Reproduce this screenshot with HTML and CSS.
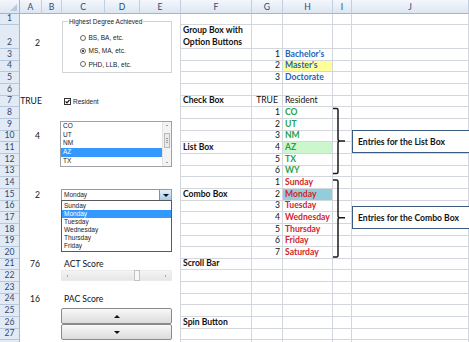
FILE: index.html
```html
<!DOCTYPE html>
<html lang="en">
<head>
    <meta charset="UTF-8">
    <title>Form Controls</title>
    <link rel="stylesheet" href="styles.css">
</head>
<body>
<div class="sheet">
    <div class="grid">
        <div class="row hdr"><div class="corner"></div><div>A</div><div>B</div><div>C</div><div>D</div><div>E</div><div>F</div><div>G</div><div>H</div><div>I</div><div>J</div></div>
        <div class="row"><div class="rh">1</div><div></div><div></div><div></div><div></div><div></div><div></div><div></div><div></div><div></div><div></div></div>
        <div class="row"><div class="rh">2</div><div class="n">2</div><div></div><div></div><div></div><div></div><div class="b wrap">Group Box with Option Buttons</div><div></div><div></div><div></div><div></div></div>
        <div class="row"><div class="rh">3</div><div></div><div></div><div></div><div></div><div></div><div></div><div class="n">1</div><div class="b blue">Bachelor's</div><div></div><div></div></div>
        <div class="row"><div class="rh">4</div><div></div><div></div><div></div><div></div><div></div><div></div><div class="n">2</div><div class="b blue yellow">Master's</div><div></div><div></div></div>
        <div class="row"><div class="rh">5</div><div></div><div></div><div></div><div></div><div></div><div></div><div class="n">3</div><div class="b blue">Doctorate</div><div></div><div></div></div>
        <div class="row"><div class="rh">6</div><div></div><div></div><div></div><div></div><div></div><div></div><div></div><div></div><div></div><div></div></div>
        <div class="row"><div class="rh">7</div><div class="c">TRUE</div><div></div><div></div><div></div><div></div><div class="b">Check Box</div><div class="c">TRUE</div><div>Resident</div><div></div><div></div></div>
        <div class="row"><div class="rh">8</div><div></div><div></div><div></div><div></div><div></div><div></div><div class="n">1</div><div class="b green">CO</div><div></div><div></div></div>
        <div class="row"><div class="rh">9</div><div></div><div></div><div></div><div></div><div></div><div></div><div class="n">2</div><div class="b green">UT</div><div></div><div></div></div>
        <div class="row"><div class="rh">10</div><div class="n">4</div><div></div><div></div><div></div><div></div><div></div><div class="n">3</div><div class="b green">NM</div><div></div><div></div></div>
        <div class="row"><div class="rh">11</div><div></div><div></div><div></div><div></div><div></div><div class="b">List Box</div><div class="n">4</div><div class="b green mint">AZ</div><div></div><div></div></div>
        <div class="row"><div class="rh">12</div><div></div><div></div><div></div><div></div><div></div><div></div><div class="n">5</div><div class="b green">TX</div><div></div><div></div></div>
        <div class="row"><div class="rh">13</div><div></div><div></div><div></div><div></div><div></div><div></div><div class="n">6</div><div class="b green">WY</div><div></div><div></div></div>
        <div class="row"><div class="rh">14</div><div></div><div></div><div></div><div></div><div></div><div></div><div class="n">1</div><div class="b red">Sunday</div><div></div><div></div></div>
        <div class="row"><div class="rh">15</div><div class="n">2</div><div></div><div></div><div></div><div></div><div class="b">Combo Box</div><div class="n">2</div><div class="b red teal">Monday</div><div></div><div></div></div>
        <div class="row"><div class="rh">16</div><div></div><div></div><div></div><div></div><div></div><div></div><div class="n">3</div><div class="b red">Tuesday</div><div></div><div></div></div>
        <div class="row"><div class="rh">17</div><div></div><div></div><div></div><div></div><div></div><div></div><div class="n">4</div><div class="b red">Wednesday</div><div></div><div></div></div>
        <div class="row"><div class="rh">18</div><div></div><div></div><div></div><div></div><div></div><div></div><div class="n">5</div><div class="b red">Thursday</div><div></div><div></div></div>
        <div class="row"><div class="rh">19</div><div></div><div></div><div></div><div></div><div></div><div></div><div class="n">6</div><div class="b red">Friday</div><div></div><div></div></div>
        <div class="row"><div class="rh">20</div><div></div><div></div><div></div><div></div><div></div><div></div><div class="n">7</div><div class="b red">Saturday</div><div></div><div></div></div>
        <div class="row"><div class="rh">21</div><div class="n">76</div><div></div><div>ACT Score</div><div></div><div></div><div class="b">Scroll Bar</div><div></div><div></div><div></div><div></div></div>
        <div class="row"><div class="rh">22</div><div></div><div></div><div></div><div></div><div></div><div></div><div></div><div></div><div></div><div></div></div>
        <div class="row"><div class="rh">23</div><div></div><div></div><div></div><div></div><div></div><div></div><div></div><div></div><div></div><div></div></div>
        <div class="row"><div class="rh">24</div><div class="n">16</div><div></div><div>PAC Score</div><div></div><div></div><div></div><div></div><div></div><div></div><div></div></div>
        <div class="row"><div class="rh">25</div><div></div><div></div><div></div><div></div><div></div><div></div><div></div><div></div><div></div><div></div></div>
        <div class="row"><div class="rh">26</div><div></div><div></div><div></div><div></div><div></div><div class="b">Spin Button</div><div></div><div></div><div></div><div></div></div>
        <div class="row"><div class="rh">27</div><div></div><div></div><div></div><div></div><div></div><div></div><div></div><div></div><div></div><div></div></div>
        <div class="row"><div class="rh"></div><div></div><div></div><div></div><div></div><div></div><div></div><div></div><div></div><div></div><div></div></div>
    </div>

    <!-- form controls floating over the sheet -->
    <div class="group">
        <span class="legend">Highest Degree Achieved</span>
        <div class="opts">
            <div class="opt"><span class="radio"></span>BS, BA, etc.</div>
            <div class="opt"><span class="radio on"></span>MS, MA, etc.</div>
            <div class="opt"><span class="radio"></span>PHD, LLB, etc.</div>
        </div>
    </div>

    <div class="check">
        <span class="box">
            <svg width="5" height="5" viewBox="0 0 5 5"><path d="M0.6 2.4 L2 3.9 L4.5 0.8" fill="none" stroke="#111" stroke-width="1.1"/></svg>
        </span>
        Resident
    </div>

    <div class="listbox">
        <div class="items">
            <div class="item">CO</div>
            <div class="item">UT</div>
            <div class="item">NM</div>
            <div class="item sel">AZ</div>
            <div class="item">TX</div>
        </div>
        <div class="vscroll">
            <span class="arr up"></span>
            <span class="vthumb"><i></i><i></i><i></i></span>
            <span class="arr down"></span>
        </div>
    </div>

    <div class="combo">
        <span class="value">Monday</span>
        <span class="drop"><span class="arr down dark"></span></span>
    </div>
    <div class="dropdown">
        <div class="item">Sunday</div>
        <div class="item sel">Monday</div>
        <div class="item">Tuesday</div>
        <div class="item">Wednesday</div>
        <div class="item">Thursday</div>
        <div class="item">Friday</div>
    </div>

    <div class="hscroll">
        <span class="arr left"></span>
        <span class="hthumb"></span>
        <span class="arr right"></span>
    </div>

    <div class="spin">
        <div><span class="arr up big"></span></div>
        <div><span class="arr down big"></span></div>
    </div>

    <svg class="braces" width="20" height="160" viewBox="0 0 20 160">
        <path d="M3 4.5 H6.5 Q8 4.5 8 6 V35 Q8 37 10 37 H15 M10 37 Q8 37 8 39 V68 Q8 69.5 6.5 69.5 H3" fill="none" stroke="#1b1b1b" stroke-width="1.5"/>
        <path d="M3 76 H6.5 Q8 76 8 77.5 V111.7 Q8 113.7 10 113.7 H15 M10 113.7 Q8 113.7 8 115.7 V151.5 Q8 153 6.5 153 H3" fill="none" stroke="#1b1b1b" stroke-width="1.5"/>
    </svg>

    <div class="note note-list">Entries for the List Box</div>
    <div class="note note-combo">Entries for the Combo Box</div>
</div>
</body>
</html>
```

FILE: styles.css
```css
body {
    margin: 0;
    background-color: #fff;
    font-family: Lato, "Liberation Sans", sans-serif;
    overflow: hidden;
}

.sheet {
    position: relative;
    width: 469px;
    height: 342px;
    overflow: hidden;
}

/* Grade da planilha */
.grid {
    display: grid;
    grid-template-columns: 20px 22px 20px 43px 35px 41px 71px 31px 50px 19px 117px;
    grid-template-rows: 14px 11px 24px repeat(25, 11.67px) 12px;
    font-size: 8.6px;
    color: #111;
}

.row {
    display: contents;
}

.row > div {
    box-sizing: border-box;
    display: flex;
    align-items: flex-end;
    padding: 0 2px 1px;
    line-height: 10px;
    white-space: nowrap;
    min-width: 0;
}

.row > div:nth-child(n+7) {
    border-right: 1px solid #d3d7dd;
    border-bottom: 1px solid #d3d7dd;
}

.row > div:nth-child(6) {
    border-right: 1px solid #d3d7dd;
}

.row > .rh {
    background-color: #e2eaf6;
    border-right: 1px solid #9eb6ce;
    border-bottom: 1px solid #b7c8dc;
    justify-content: center;
    color: #2f4a70;
    padding: 0 0 1px;
}

.row.hdr > div {
    background: linear-gradient(#f4f7fb, #dce6f2);
    border-right: 1px solid #c0cfe0;
    border-bottom: 1px solid #9eb6ce;
    justify-content: center;
    align-items: center;
    color: #2f4a70;
    padding: 0;
}

.row.hdr > .corner {
    position: relative;
    border-right: 1px solid #9eb6ce;
}

.corner::after {
    content: "";
    position: absolute;
    right: 2px;
    bottom: 2px;
    border-left: 7px solid transparent;
    border-bottom: 7px solid #b9c8da;
}

.n { justify-content: flex-end; }
.c { justify-content: center; }
.b { font-weight: 700; }

.row > .wrap {
    white-space: normal;
    line-height: 11.5px;
    padding-bottom: 0;
}

.blue { color: #1f63b6; }
.green { color: #27a14a; }
.red { color: #d2232b; }

.row > .yellow { background-color: #ffff99; }
.row > .mint { background-color: #ccf7cc; }
.row > .teal { background-color: #92cddc; }

/* Controles de formulario */
.group, .check, .listbox, .combo, .dropdown {
    font-family: "Liberation Sans", Arial, sans-serif;
    font-size: 6.5px;
    color: #1a1a1a;
}

.group {
    position: absolute;
    left: 62px;
    top: 21px;
    width: 110px;
    height: 52px;
    box-sizing: border-box;
    border: 1px solid #cfd4d9;
}

.legend {
    position: absolute;
    left: 5px;
    top: -4px;
    padding: 0 1px;
    background-color: #fff;
}

.opts {
    display: flex;
    flex-direction: column;
    padding: 9px 0 0 17px;
}

.opt {
    display: flex;
    align-items: center;
    gap: 2.5px;
    height: 13.3px;
}

.radio {
    position: relative;
    width: 6px;
    height: 6px;
    box-sizing: border-box;
    border: 1px solid #6a6a6a;
    border-radius: 50%;
    background-color: #fff;
}

.radio.on::after {
    content: "";
    position: absolute;
    left: 1px;
    top: 1px;
    width: 2px;
    height: 2px;
    border-radius: 50%;
    background-color: #111;
}

.check {
    position: absolute;
    left: 64px;
    top: 98px;
    display: flex;
    align-items: center;
    gap: 2px;
}

.box {
    display: flex;
    align-items: center;
    justify-content: center;
    width: 7px;
    height: 7px;
    box-sizing: border-box;
    border: 1px solid #333;
    background-color: #fff;
}

.listbox {
    position: absolute;
    left: 60px;
    top: 121px;
    width: 112px;
    height: 46px;
    box-sizing: border-box;
    border: 1px solid #9ca2a8;
    background-color: #fff;
    display: flex;
    overflow: hidden;
}

.items {
    flex: 1;
}

.item {
    height: 8.7px;
    line-height: 8.7px;
    padding-left: 2px;
}

.item.sel {
    background-color: #3399ff;
    color: #fff;
}

.vscroll {
    position: relative;
    width: 9px;
    background-color: #f3f3f3;
    border-left: 1px solid #e2e2e2;
    display: flex;
    flex-direction: column;
    justify-content: space-between;
    align-items: center;
    padding: 3px 0;
    box-sizing: border-box;
}

.vthumb {
    position: absolute;
    left: 1px;
    top: 11px;
    width: 6px;
    height: 15px;
    box-sizing: border-box;
    border: 1px solid #b8b8b8;
    background-color: #eaeaea;
    display: flex;
    flex-direction: column;
    justify-content: center;
    align-items: center;
    gap: 1px;
}

.vthumb i {
    width: 2px;
    height: 1px;
    background-color: #9a9a9a;
}

/* Setas pequenas */
.arr {
    width: 0;
    height: 0;
}
.arr.up {
    border-left: 1.5px solid transparent;
    border-right: 1.5px solid transparent;
    border-bottom: 1.5px solid #555;
}
.arr.down {
    border-left: 1.5px solid transparent;
    border-right: 1.5px solid transparent;
    border-top: 1.5px solid #555;
}
.arr.left {
    border-top: 1.5px solid transparent;
    border-bottom: 1.5px solid transparent;
    border-right: 1.5px solid #666;
}
.arr.right {
    border-top: 1.5px solid transparent;
    border-bottom: 1.5px solid transparent;
    border-left: 1.5px solid #666;
}
.arr.down.dark {
    border-left-width: 3px;
    border-right-width: 3px;
    border-top: 3px solid #111;
}
.arr.big.up {
    border-left-width: 3.5px;
    border-right-width: 3.5px;
    border-bottom: 3.5px solid #111;
}
.arr.big.down {
    border-left-width: 3.5px;
    border-right-width: 3.5px;
    border-top: 3.5px solid #111;
}

.combo {
    position: absolute;
    left: 61px;
    top: 189px;
    width: 111px;
    height: 12px;
    box-sizing: border-box;
    border: 1px solid #8f9ba8;
    background-color: #fff;
    display: flex;
}

.value {
    flex: 1;
    padding-left: 2px;
    line-height: 10px;
}

.drop {
    width: 11px;
    background: linear-gradient(#e2effc, #a6c9ec);
    border-left: 1px solid #7094bb;
    display: flex;
    align-items: center;
    justify-content: center;
}

.dropdown {
    position: absolute;
    left: 61px;
    top: 200px;
    width: 111px;
    height: 52px;
    box-sizing: border-box;
    border: 1px solid #5a5a5a;
    background-color: #fff;
    padding-top: 0.5px;
}

.dropdown .item {
    height: 8.2px;
    line-height: 8.2px;
}

.hscroll {
    position: absolute;
    left: 61px;
    top: 270px;
    width: 111px;
    height: 11px;
    box-sizing: border-box;
    background: linear-gradient(#f4f4f4, #e6e6e6);
    border: 1px solid #ebebeb;
    display: flex;
    align-items: center;
    justify-content: space-between;
    padding: 0 5px;
}

.hthumb {
    position: absolute;
    left: 72px;
    top: -1px;
    width: 6px;
    height: 11px;
    box-sizing: border-box;
    border: 1px solid #c4c4c4;
    background-color: #f7f7f7;
}

.spin {
    position: absolute;
    left: 61px;
    top: 308px;
    width: 111px;
    display: flex;
    flex-direction: column;
}

.spin div {
    height: 16px;
    box-sizing: border-box;
    border: 1px solid #8a8a8a;
    border-radius: 2px;
    background: linear-gradient(#f8f8f8, #dcdcdc);
    display: flex;
    align-items: center;
    justify-content: center;
}

.braces {
    position: absolute;
    left: 330px;
    top: 104px;
}

/* Caixas de texto */
.note {
    position: absolute;
    left: 352px;
    width: 130px;
    height: 23px;
    box-sizing: border-box;
    border: 1.5px solid #3b5a80;
    background-color: #fff;
    font-weight: 700;
    font-size: 8.6px;
    display: flex;
    align-items: center;
    padding-left: 5px;
    color: #111;
}

.note-list { top: 130px; }
.note-combo { top: 206px; }
```
